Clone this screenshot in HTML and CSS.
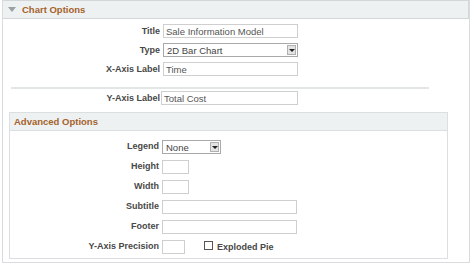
FILE: index.html
```html
<!DOCTYPE html>
<html lang="en">

<head>
    <meta charset="UTF-8">
    <title>Chart Options</title>
    <link rel="stylesheet" href="styles.css">
</head>

<body>

    <div class="panel">
        <div class="panel-header">
            <span class="arrow"></span>
            <span class="panel-title">Chart Options</span>
        </div>

        <div class="form">
            <label class="label">Title</label>
            <input class="field wide" type="text" value="Sale Information Model">

            <label class="label">Type</label>
            <div class="select wide">
                <span>2D Bar Chart</span>
                <span class="select-btn"></span>
            </div>

            <label class="label">X-Axis Label</label>
            <input class="field wide" type="text" value="Time">
        </div>

        <div class="separator"></div>

        <div class="form form-y">
            <label class="label">Y-Axis Label</label>
            <input class="field wide-y" type="text" value="Total Cost">
        </div>

        <div class="group">
            <div class="group-header">Advanced Options</div>

            <div class="form form-adv">
                <label class="label">Legend</label>
                <div class="select small">
                    <span>None</span>
                    <span class="select-btn"></span>
                </div>

                <label class="label">Height</label>
                <input class="field tiny" type="text">

                <label class="label">Width</label>
                <input class="field tiny" type="text">

                <label class="label">Subtitle</label>
                <input class="field long" type="text">

                <label class="label">Footer</label>
                <input class="field long" type="text">

                <label class="label">Y-Axis Precision</label>
                <div class="inline">
                    <input class="field tiny small-tiny" type="text">
                    <label class="check"><span class="box"></span>Exploded Pie</label>
                </div>
            </div>
        </div>
    </div>

</body>

</html>
```

FILE: styles.css
```css
body {
    margin: 0;
    font-family: 'Liberation Sans', Arial, sans-serif;
    background: #fff;
}

.panel {
    width: 468px;
    height: 263px;
    margin-left: 2px;
    border: 1px solid #d9dcdd;
    border-top: none;
    box-sizing: border-box;
}

.panel-header {
    height: 19px;
    background: #eef1f2;
    border: 1px solid #d3d7d8;
    border-left: none;
    display: flex;
    align-items: center;
    padding-left: 5px;
    box-sizing: border-box;
}

.arrow {
    width: 0;
    height: 0;
    border-left: 4px solid transparent;
    border-right: 4px solid transparent;
    border-top: 5px solid #9aa0a4;
    margin-right: 6px;
}

.panel-title,
.group-header {
    color: #a5622a;
    font-weight: bold;
    font-size: 9.5px;
}

.form {
    display: grid;
    grid-template-columns: 157px auto;
    column-gap: 3px;
    row-gap: 5px;
    align-items: center;
    padding-top: 5px;
}

.label {
    text-align: right;
    font-size: 9px;
    font-weight: bold;
    color: #484848;
}

.field {
    height: 14px;
    border: 1px solid #cfcfcf;
    padding: 0 2px;
    font-family: inherit;
    font-size: 9.5px;
    color: #555;
    box-sizing: border-box;
    outline: none;
}

.wide {
    width: 135px;
}

.wide-y {
    width: 137px;
    margin-left: -2px;
}

.long {
    width: 135px;
}

.tiny {
    width: 27px;
}

.small-tiny {
    width: 23px;
}

.select {
    height: 14px;
    border: 1px solid #a9a9a9;
    display: flex;
    align-items: center;
    justify-content: space-between;
    font-size: 9.5px;
    color: #444;
    padding-left: 3px;
    box-sizing: border-box;
}

.small {
    width: 59px;
}

.select-btn {
    width: 9px;
    height: 10px;
    margin-right: 1px;
    background: #e4e4e4;
    border: 1px solid #b0b0b0;
    box-sizing: border-box;
    position: relative;
}

.select-btn::after {
    content: '';
    position: absolute;
    left: 1px;
    top: 3px;
    border-left: 3px solid transparent;
    border-right: 3px solid transparent;
    border-top: 3px solid #222;
}

.separator {
    height: 2px;
    background: #e3e6e7;
    margin: 11px 40px 0 8px;
}

.form-y {
    padding-top: 2px;
}

.group {
    margin: 7px 21px 0 6px;
    border: 1px solid #dcdfe0;
    height: 147px;
    box-sizing: border-box;
}

.group-header {
    height: 17px;
    background: #eef1f2;
    border-bottom: 1px solid #dcdfe0;
    padding-left: 4px;
    line-height: 17px;
}

.form-adv {
    grid-template-columns: 149px auto;
    padding-top: 9px;
    row-gap: 6px;
}

.form-adv .label {
    margin-top: -2px;
}

.inline {
    display: flex;
    align-items: center;
}

.check {
    display: flex;
    align-items: center;
    margin-left: 19px;
    font-size: 9px;
    font-weight: bold;
    color: #484848;
}

.box {
    width: 7px;
    height: 7px;
    border: 1px solid #555;
    margin-right: 4px;
    margin-top: -3px;
}
```
